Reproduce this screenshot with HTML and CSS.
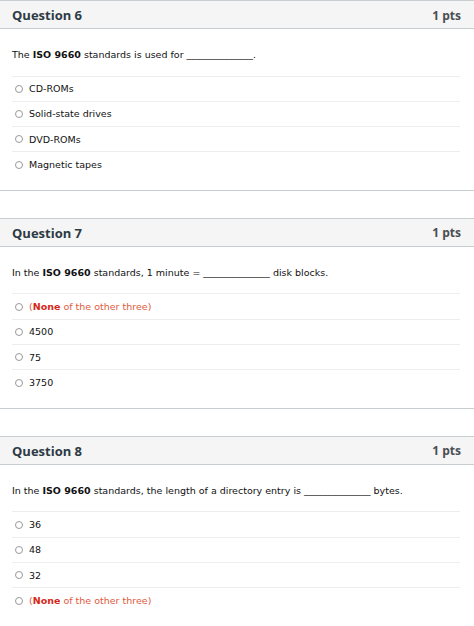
FILE: index.html
```html
<!DOCTYPE html>
<html>
<head>
<meta charset="utf-8">
<link rel="stylesheet" href="styles.css">
</head>
<body>
<div class="quiz">
  <div class="card">
    <div class="head"><span class="qname">Question 6</span><span class="pts">1 pts</span></div>
    <div class="body">
      <div class="qtext">The <b>ISO 9660</b> standards is used for ______________.</div>
      <div class="answers">
        <div class="ans"><span class="radio"></span><span>CD-ROMs</span></div>
        <div class="ans"><span class="radio"></span><span>Solid-state drives</span></div>
        <div class="ans"><span class="radio"></span><span>DVD-ROMs</span></div>
        <div class="ans"><span class="radio"></span><span>Magnetic tapes</span></div>
      </div>
    </div>
  </div>
  <div class="card">
    <div class="head"><span class="qname">Question 7</span><span class="pts">1 pts</span></div>
    <div class="body">
      <div class="qtext">In the <b>ISO 9660</b> standards, 1 minute = ______________ disk blocks.</div>
      <div class="answers">
        <div class="ans"><span class="radio"></span><span class="none">(<b>None</b> of the other three)</span></div>
        <div class="ans"><span class="radio"></span><span>4500</span></div>
        <div class="ans"><span class="radio"></span><span>75</span></div>
        <div class="ans"><span class="radio"></span><span>3750</span></div>
      </div>
    </div>
  </div>
  <div class="card">
    <div class="head"><span class="qname">Question 8</span><span class="pts">1 pts</span></div>
    <div class="body">
      <div class="qtext">In the <b>ISO 9660</b> standards, the length of a directory entry is ______________ bytes.</div>
      <div class="answers">
        <div class="ans"><span class="radio"></span><span>36</span></div>
        <div class="ans"><span class="radio"></span><span>48</span></div>
        <div class="ans"><span class="radio"></span><span>32</span></div>
        <div class="ans"><span class="radio"></span><span class="none">(<b>None</b> of the other three)</span></div>
      </div>
    </div>
  </div>
</div>
</body>
</html>
```
FILE: styles.css
```css
html, body {
  margin: 0;
  padding: 0;
  background: #fff;
}
.quiz {
  display: flex;
  flex-direction: column;
  gap: 27px;
}
.card {
  border-top: 1px solid #c7cdd1;
  border-bottom: 1px solid #c7cdd1;
  background: #fff;
}
.head {
  height: 28px;
  box-sizing: border-box;
  background: #f5f5f5;
  border-bottom: 1px solid #c7cdd1;
  display: flex;
  align-items: center;
  justify-content: space-between;
  padding: 1px 13px 0 12px;
  font-family: "Open Sans", Lato, sans-serif;
  color: #2d3b45;
}
.qname {
  font-weight: 700;
  font-size: 13px;
}
.pts {
  font-weight: 700;
  font-size: 12px;
  color: #4a4f53;
}
.body {
  padding: 17px 14px 13.3px 12px;
  font-family: "DejaVu Sans", Verdana, sans-serif;
  font-size: 9.5px;
  color: #111;
}
.qtext {
  line-height: 18px;
}
.answers {
  margin-top: 11.5px;
}
.ans {
  display: flex;
  align-items: center;
  gap: 6px;
  height: 25.3px;
  box-sizing: border-box;
  border-top: 1px solid #eceeef;
  padding-left: 3px;
}
.radio {
  width: 8px;
  height: 8px;
  border: 1px solid #9a9a9a;
  border-radius: 50%;
  box-sizing: border-box;
  flex: none;
}
.none {
  color: #e05a3e;
}
.none b {
  color: #d5281a;
}
```
